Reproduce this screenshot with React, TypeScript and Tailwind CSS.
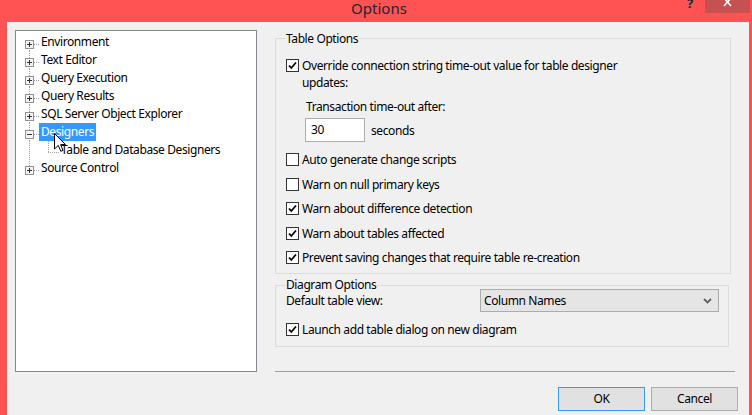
import React from "react";

const FONT = { fontFamily: '"Noto Sans", "Open Sans", sans-serif' };

function Check({ checked }: { checked: boolean }) {
  return (
    <div className="w-[13px] h-[13px] shrink-0 border border-[#333333] bg-white relative">
      {checked && (
        <svg width="11" height="11" viewBox="0 0 11 11" className="absolute left-0 top-0">
          <path d="M2 5.5 L4.3 8 L9 2.5" fill="none" stroke="#000" strokeWidth="1.8" />
        </svg>
      )}
    </div>
  );
}

function CheckRow({ checked, children }: { checked: boolean; children: React.ReactNode }) {
  return (
    <div className="flex items-center h-[17px]">
      <Check checked={checked} />
      <span className="ml-[3px] leading-[17px]">{children}</span>
    </div>
  );
}

function RootConnector({ first, last, expanded }: { first?: boolean; last?: boolean; expanded?: boolean }) {
  return (
    <svg width="23" height="18" viewBox="0 0 23 18" className="shrink-0">
      {!first && <line x1="13.5" y1="0" x2="13.5" y2="7" stroke="#A0A0A0" strokeDasharray="1 1" />}
      {!last && <line x1="13.5" y1="17" x2="13.5" y2="18" stroke="#A0A0A0" strokeDasharray="1 1" />}
      <line x1="18" y1="11.5" x2="23" y2="11.5" stroke="#A0A0A0" strokeDasharray="1 1" />
      <rect x="9.5" y="7.5" width="8" height="8" fill="#F4F4F4" stroke="#919191" />
      <line x1="11" y1="11.5" x2="16" y2="11.5" stroke="#333" />
      {!expanded && <line x1="13.5" y1="9" x2="13.5" y2="14" stroke="#333" />}
    </svg>
  );
}

function TreeRow({ label, first, last, expanded, selected }: { label: string; first?: boolean; last?: boolean; expanded?: boolean; selected?: boolean }) {
  return (
    <div className="flex items-center h-[18px]">
      <RootConnector first={first} last={last} expanded={expanded} />
      <span className={`px-[2px] h-[18px] leading-[18px] ${selected ? "bg-[#3399FF] text-white" : "text-black"}`}>{label}</span>
    </div>
  );
}

export default function App() {
  return (
    <div className="w-[752px] h-[415px] bg-[#FF5353] flex flex-col overflow-hidden text-[12px] tracking-[-0.4px] text-black" style={FONT}>
      <div className="relative h-[22px] shrink-0 flex justify-center">
        <span className="ml-[6px] text-[15px] leading-[16px] tracking-normal text-[#1E2530]">Options</span>
        <span className="absolute left-[687px] top-[-4px] text-[13px] leading-[14px] font-bold text-[#1E2530]">?</span>
        <div className="absolute left-[705px] top-0 w-[45px] h-[13px] bg-[#C75050] flex justify-center">
          <svg width="10" height="7" viewBox="0 0 10 7">
            <path d="M1 -2 L8 6 M8 -2 L1 6" stroke="#fff" strokeWidth="1.6" />
          </svg>
        </div>
      </div>
      <div className="flex-1 ml-[7px] mr-[3px] bg-[#F0F0F0] flex pl-[8px] pt-[8px]">
        <div className="relative w-[242px] h-[342px] shrink-0 border border-[#828790] bg-white pt-[2px]">
          <TreeRow label="Environment" first />
          <TreeRow label="Text Editor" />
          <TreeRow label="Query Execution" />
          <TreeRow label="Query Results" />
          <TreeRow label="SQL Server Object Explorer" />
          <TreeRow label="Designers" expanded selected />
          <div className="flex items-center h-[18px]">
            <svg width="43" height="18" viewBox="0 0 43 18" className="shrink-0">
              <line x1="13.5" y1="0" x2="13.5" y2="18" stroke="#A0A0A0" strokeDasharray="1 1" />
              <line x1="32.5" y1="0" x2="32.5" y2="11" stroke="#A0A0A0" strokeDasharray="1 1" />
              <line x1="32" y1="11.5" x2="43" y2="11.5" stroke="#A0A0A0" strokeDasharray="1 1" />
            </svg>
            <span className="px-[2px] leading-[18px]">Table and Database Designers</span>
          </div>
          <TreeRow label="Source Control" last />
          <svg width="13" height="20" viewBox="0 0 13 20" className="absolute left-[38px] top-[102px]">
            <path d="M0.5 0.5 L0.5 16 L4.3 12.4 L6.8 18.3 L9 17.4 L6.6 11.6 L11.5 11.6 Z" fill="#fff" stroke="#000" strokeWidth="1" strokeLinejoin="miter" />
          </svg>
        </div>
        <div className="ml-[18px] flex flex-col">
          <div className="relative mt-[8px] w-[456px] h-[236px] border border-[#DCDCDC] pt-[17.5px] pl-[10px]">
            <span className="absolute left-[9px] top-[-8px] px-[1px] leading-[15px] bg-[#F0F0F0]">Table Options</span>
            <div className="flex items-start">
              <div className="mt-[2px]"><Check checked /></div>
              <span className="ml-[3px] leading-[17px]">
                Override connection string time-out value for table designer
                <br />
                updates:
              </span>
            </div>
            <div className="pl-[20px] mt-[7px] leading-[17px]">Transaction time-out after:</div>
            <div className="pl-[19px] mt-[3.5px] flex items-center">
              <div className="w-[60px] h-[24px] border border-[#ABADB3] bg-white pl-[5px] leading-[22px]">30</div>
              <span className="ml-[6px] mt-[2px]">seconds</span>
            </div>
            <div className="mt-[9px] flex flex-col gap-[7.5px]">
              <CheckRow checked={false}>Auto generate change scripts</CheckRow>
              <CheckRow checked={false}>Warn on null primary keys</CheckRow>
              <CheckRow checked>Warn about difference detection</CheckRow>
              <CheckRow checked>Warn about tables affected</CheckRow>
              <CheckRow checked>Prevent saving changes that require table re-creation</CheckRow>
            </div>
          </div>
          <div className="relative mt-[11px] w-[454px] h-[62px] border border-[#DCDCDC] pt-[3px] pl-[10px]">
            <span className="absolute left-[9px] top-[-8px] px-[1px] leading-[14px] bg-[#F0F0F0]">Diagram Options</span>
            <div className="flex items-center">
              <span className="w-[194px] leading-[17px]">Default table view:</span>
              <div className="w-[239px] h-[23px] border border-[#ACACAC] bg-[#E5E5E5] flex items-center justify-between pl-[3px] pr-[6px]">
                <span>Column Names</span>
                <svg width="9" height="6" viewBox="0 0 9 6">
                  <path d="M1 1 L4.5 4.5 L8 1" fill="none" stroke="#606060" strokeWidth="1.8" />
                </svg>
              </div>
            </div>
            <div className="mt-[8.5px]">
              <CheckRow checked>Launch add table dialog on new diagram</CheckRow>
            </div>
          </div>
          <div className="mt-[24px] w-[460px] h-px bg-[#A0A0A0]" />
          <div className="mt-[15px] w-[463px] flex justify-end gap-[6px]">
            <div className="w-[87px] h-[24px] border border-[#3399FF] bg-[#E1E1E1] flex items-center justify-center">OK</div>
            <div className="w-[87px] h-[24px] border border-[#ADADAD] bg-[#E1E1E1] flex items-center justify-center">Cancel</div>
          </div>
        </div>
      </div>
    </div>
  );
}
